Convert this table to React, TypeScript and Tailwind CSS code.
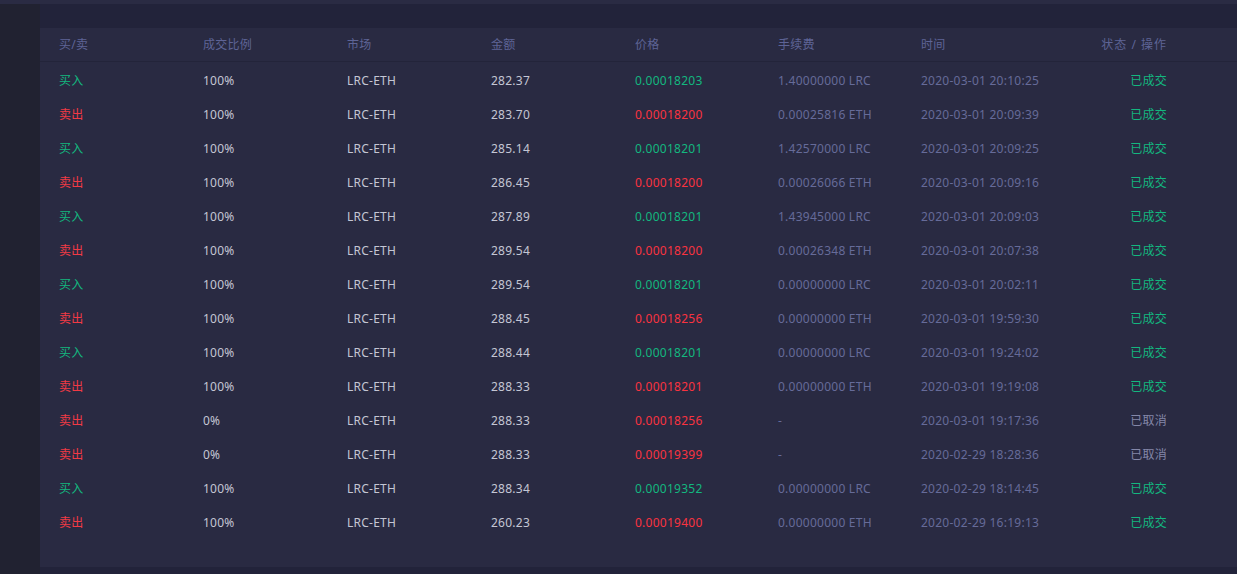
import React from "react";

type Row = {
  side: "buy" | "sell";
  ratio: string;
  amount: string;
  price: string;
  fee: string;
  time: string;
  done: boolean;
};

const rows: Row[] = [
  { side: "buy", ratio: "100%", amount: "282.37", price: "0.00018203", fee: "1.40000000 LRC", time: "2020-03-01 20:10:25", done: true },
  { side: "sell", ratio: "100%", amount: "283.70", price: "0.00018200", fee: "0.00025816 ETH", time: "2020-03-01 20:09:39", done: true },
  { side: "buy", ratio: "100%", amount: "285.14", price: "0.00018201", fee: "1.42570000 LRC", time: "2020-03-01 20:09:25", done: true },
  { side: "sell", ratio: "100%", amount: "286.45", price: "0.00018200", fee: "0.00026066 ETH", time: "2020-03-01 20:09:16", done: true },
  { side: "buy", ratio: "100%", amount: "287.89", price: "0.00018201", fee: "1.43945000 LRC", time: "2020-03-01 20:09:03", done: true },
  { side: "sell", ratio: "100%", amount: "289.54", price: "0.00018200", fee: "0.00026348 ETH", time: "2020-03-01 20:07:38", done: true },
  { side: "buy", ratio: "100%", amount: "289.54", price: "0.00018201", fee: "0.00000000 LRC", time: "2020-03-01 20:02:11", done: true },
  { side: "sell", ratio: "100%", amount: "288.45", price: "0.00018256", fee: "0.00000000 ETH", time: "2020-03-01 19:59:30", done: true },
  { side: "buy", ratio: "100%", amount: "288.44", price: "0.00018201", fee: "0.00000000 LRC", time: "2020-03-01 19:24:02", done: true },
  { side: "sell", ratio: "100%", amount: "288.33", price: "0.00018201", fee: "0.00000000 ETH", time: "2020-03-01 19:19:08", done: true },
  { side: "sell", ratio: "0%", amount: "288.33", price: "0.00018256", fee: "-", time: "2020-03-01 19:17:36", done: false },
  { side: "sell", ratio: "0%", amount: "288.33", price: "0.00019399", fee: "-", time: "2020-02-29 18:28:36", done: false },
  { side: "buy", ratio: "100%", amount: "288.34", price: "0.00019352", fee: "0.00000000 LRC", time: "2020-02-29 18:14:45", done: true },
  { side: "sell", ratio: "100%", amount: "260.23", price: "0.00019400", fee: "0.00000000 ETH", time: "2020-02-29 16:19:13", done: true },
];

const grid = "grid grid-cols-[144px_144px_144px_144px_143px_143px_180px_66px] items-center pl-[19px]";

export default function App() {
  return (
    <div
      className="w-[1237px] h-[574px] bg-[#22233a] flex flex-col overflow-hidden text-[12px] tracking-[0.25px]"
      style={{ fontFamily: '"Noto Sans", "Noto Sans CJK SC", sans-serif' }}
    >
      <div className="h-[4px] bg-[#2a2b43]" />
      <div className="flex flex-1">
        <div className="w-[40px] bg-[#212231]" />
        <div className="flex-1 pt-[24px] pb-[7px] flex flex-col">
          <div className="flex-1 bg-[#292a42]">
            <div className={`${grid} h-[34px] pt-[1px] border-b border-[#23243a] text-[#5e6496]`}>
              <div>买/卖</div>
              <div>成交比例</div>
              <div>市场</div>
              <div>金额</div>
              <div>价格</div>
              <div>手续费</div>
              <div>时间</div>
              <div className="text-right whitespace-nowrap tracking-[1px]">状态 / 操作</div>
            </div>
            <div className="pt-[2px]">
              {rows.map((r, i) => (
                <div key={i} className={`${grid} h-[34px]`}>
                  <div className={r.side === "buy" ? "text-[#13b77f]" : "text-[#f23a45]"}>
                    {r.side === "buy" ? "买入" : "卖出"}
                  </div>
                  <div className="text-[#c4c6d4]">{r.ratio}</div>
                  <div className="text-[#c4c6d4]">LRC-ETH</div>
                  <div className="text-[#c4c6d4]">{r.amount}</div>
                  <div className={r.side === "buy" ? "text-[#13b77f]" : "text-[#f93340]"}>{r.price}</div>
                  <div className="text-[#666b99]">{r.fee}</div>
                  <div className="text-[#666b99] whitespace-nowrap">{r.time}</div>
                  <div className={`text-right ${r.done ? "text-[#13b77f]" : "text-[#8487a8]"}`}>
                    {r.done ? "已成交" : "已取消"}
                  </div>
                </div>
              ))}
            </div>
          </div>
        </div>
      </div>
    </div>
  );
}
